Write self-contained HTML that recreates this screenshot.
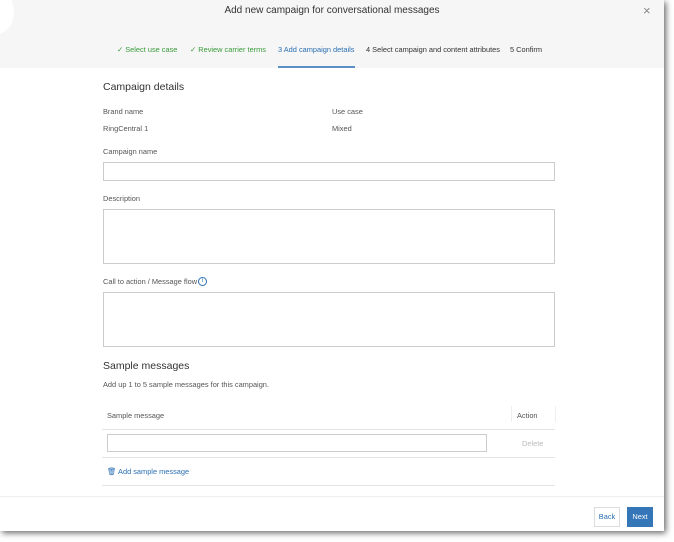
<!DOCTYPE html><html><head><style>
body{margin:0;width:674px;height:542px;background:#fff;font-family:"Liberation Sans",Arial,sans-serif;position:relative;overflow:hidden}
.win{position:absolute;left:0;top:0;width:664px;height:531px;background:#fff;box-shadow:2px 2px 6px rgba(0,0,0,.6)}
.hdr{position:absolute;left:0;top:0;width:664px;height:68px;background:#f6f6f6}
.t{position:absolute;font-size:7.4px;color:#333;white-space:nowrap}
.in{position:absolute;border:1px solid #ccc;background:#fff;box-sizing:border-box}
.line{position:absolute;height:1px;background:#e4e4e4}
</style></head><body>
<div class="win">
<div class="hdr"></div>
<div style="position:absolute;left:-20px;top:-10px;width:34px;height:44px;border-radius:50%;background:#fff"></div>
<div class="t" style="left:0;width:664px;text-align:center;top:5px;font-size:10px;color:#333">Add new campaign for conversational messages</div>
<div class="t" style="left:643px;top:3px;font-size:13px;color:#888">×</div>
<div class="t" style="left:117px;top:45px;color:#3a9a3a">✓ Select use case</div>
<div class="t" style="left:190px;top:45px;color:#3a9a3a">✓ Review carrier terms</div>
<div class="t" style="left:278px;top:45px;color:#2b6fb2">3 Add campaign details</div>
<div style="position:absolute;left:278px;top:66px;width:77px;height:2px;background:#5b8fc8"></div>
<div class="t" style="left:366px;top:45px">4 Select campaign and content attributes</div>
<div class="t" style="left:510px;top:45px">5 Confirm</div>
<div class="t" style="left:103px;top:81px;font-size:10.5px">Campaign details</div>
<div class="t" style="left:103px;top:107px;color:#555">Brand name</div>
<div class="t" style="left:332px;top:107px;color:#555">Use case</div>
<div class="t" style="left:103px;top:124px;color:#555">RingCentral 1</div>
<div class="t" style="left:332px;top:124px;color:#555">Mixed</div>
<div class="t" style="left:103px;top:147px;color:#555">Campaign name</div>
<div class="in" style="left:103px;top:162px;width:452px;height:19px"></div>
<div class="t" style="left:103px;top:194px;color:#555">Description</div>
<div class="in" style="left:103px;top:209px;width:452px;height:55px"></div>
<div class="t" style="left:103px;top:277px;color:#555">Call to action / Message flow</div>
<div style="position:absolute;left:198px;top:277px;width:7px;height:7px;border:1px solid #2b6fb2;border-radius:50%;font-size:6px;color:#2b6fb2;text-align:center;line-height:7px">i</div>
<div class="in" style="left:103px;top:292px;width:452px;height:55px"></div>
<div class="t" style="left:103px;top:360px;font-size:10.5px">Sample messages</div>
<div class="t" style="left:103px;top:380px;color:#555">Add up 1 to 5 sample messages for this campaign.</div>
<div class="t" style="left:107px;top:411px;color:#555">Sample message</div>
<div style="position:absolute;left:511px;top:406px;width:1px;height:16px;background:#eee"></div>
<div style="position:absolute;left:555px;top:406px;width:1px;height:16px;background:#eee"></div>
<div class="t" style="left:517px;top:411px;color:#555">Action</div>
<div class="line" style="left:102px;top:429px;width:453px"></div>
<div class="in" style="left:107px;top:434px;width:380px;height:18px"></div>
<div class="t" style="left:522px;top:439px;color:#bbb">Delete</div>
<div class="line" style="left:102px;top:457px;width:453px"></div>
<div class="t" style="left:107px;top:467px;color:#2b6fb2">🗑 Add sample message</div>
<div class="line" style="left:102px;top:485px;width:453px"></div>
<div class="line" style="left:0;top:496px;width:664px;background:#eee"></div>
<div style="position:absolute;left:594px;top:507px;width:26px;height:20px;border:1px solid #ddd;box-sizing:border-box;font-size:7.4px;color:#2b6fb2;text-align:center;line-height:18px">Back</div>
<div style="position:absolute;left:627px;top:507px;width:26px;height:20px;background:#3576b8;font-size:7.4px;color:#fff;text-align:center;line-height:20px">Next</div>
</div>
</body></html>
